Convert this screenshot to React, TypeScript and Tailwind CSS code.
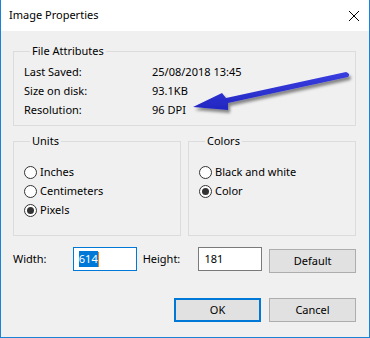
import React from "react";

function Radio({ checked, label }: { checked?: boolean; label: string }) {
  return (
    <div className="flex h-[19px] items-center">
      <span className="flex h-[13px] w-[13px] items-center justify-center rounded-full border border-[#333333] bg-white">
        {checked && <span className="h-[7px] w-[7px] rounded-full bg-[#333333]" />}
      </span>
      <span className="ml-[3px]">{label}</span>
    </div>
  );
}

function Group({ title, className, children }: { title: string; className?: string; children: React.ReactNode }) {
  return (
    <fieldset className={"border border-[#dcdcdc] " + (className ?? "")}>
      <legend className="ml-[6px] px-[2px] leading-[16px]">{title}</legend>
      {children}
    </fieldset>
  );
}

export default function App() {
  const font = { fontFamily: '"Noto Sans", "Open Sans", sans-serif' };
  return (
    <div
      className="relative flex h-[338px] w-[370px] flex-col border border-t-0 border-[#1883d7] bg-[#f0f0f0] text-[11px] text-black"
      style={font}
    >
      <div className="flex h-[31px] items-center justify-between bg-white pl-[8px] pr-[9px] text-[11px]">
        <span>Image Properties</span>
        <svg width="12" height="12" viewBox="0 0 12 12">
          <path d="M1 1 L11 11 M11 1 L1 11" stroke="#000" strokeWidth="1" />
        </svg>
      </div>
      <div className="flex flex-col pl-[12px] pr-[13px] pt-[12px]">
        <Group title="File Attributes" className="pb-[5px] pl-[10px] pt-[4px]">
          {[
            ["Last Saved:", "25/08/2018 13:45"],
            ["Size on disk:", "93.1KB"],
            ["Resolution:", "96 DPI"],
          ].map(([k, v]) => (
            <div key={k} className="flex h-[19px] items-center">
              <span className="w-[128px]">{k}</span>
              <span>{v}</span>
            </div>
          ))}
        </Group>
        <div className="mt-[7px] flex gap-[7px]">
          <Group title="Units" className="w-[168px] pb-[15px] pl-[10px] pt-[14px]">
            <Radio label="Inches" />
            <Radio label="Centimeters" />
            <Radio checked label="Pixels" />
          </Group>
          <Group title="Colors" className="w-[168px] pb-[15px] pl-[10px] pt-[14px]">
            <Radio label="Black and white" />
            <Radio checked label="Color" />
            <div className="h-[19px]" />
          </Group>
        </div>
        <div className="mt-[11px] flex items-start">
          <span className="mt-[4px] w-[60px]">Width:</span>
          <div className="flex h-[24px] w-[64px] items-center border border-[#0078d7] bg-white pl-[5px]">
            <span className="bg-[#0078d7] leading-[16px] text-white">614</span>
            <span className="h-[15px] w-[1px] bg-[#e8801c]" />
          </div>
          <span className="ml-[6px] mt-[4px] w-[56px]">Height:</span>
          <div className="flex h-[24px] w-[64px] items-center border border-[#7a7a7a] bg-white pl-[5px]">
            <span>181</span>
          </div>
          <button className="ml-[7px] mt-[2px] flex h-[24px] w-[87px] items-center justify-center border border-[#adadad] bg-[#e1e1e1]">
            Default
          </button>
        </div>
        <div className="mt-[25px] flex justify-end gap-[8px]">
          <button className="flex h-[24px] w-[87px] items-center justify-center border-2 border-[#0078d7] bg-[#e1e1e1]">
            OK
          </button>
          <button className="flex h-[24px] w-[87px] items-center justify-center border border-[#adadad] bg-[#e1e1e1]">
            Cancel
          </button>
        </div>
      </div>
      <svg className="pointer-events-none absolute left-[-1px] top-0" width="370" height="338" viewBox="0 0 370 338">
        <defs>
          <filter id="sh" x="-20%" y="-50%" width="140%" height="200%">
            <feDropShadow dx="2" dy="3" stdDeviation="1.6" floodColor="#000" floodOpacity="0.45" />
          </filter>
          <linearGradient id="bl" x1="0" y1="0" x2="0" y2="1">
            <stop offset="0" stopColor="#3a3ee0" />
            <stop offset="1" stopColor="#2226c0" />
          </linearGradient>
        </defs>
        <path
          d="M346 72 L226 98 L222 93 L193 107 L228 110 L228 103 L348 77 Q351 74 346 72 Z"
          fill="url(#bl)"
          filter="url(#sh)"
        />
      </svg>
    </div>
  );
}
